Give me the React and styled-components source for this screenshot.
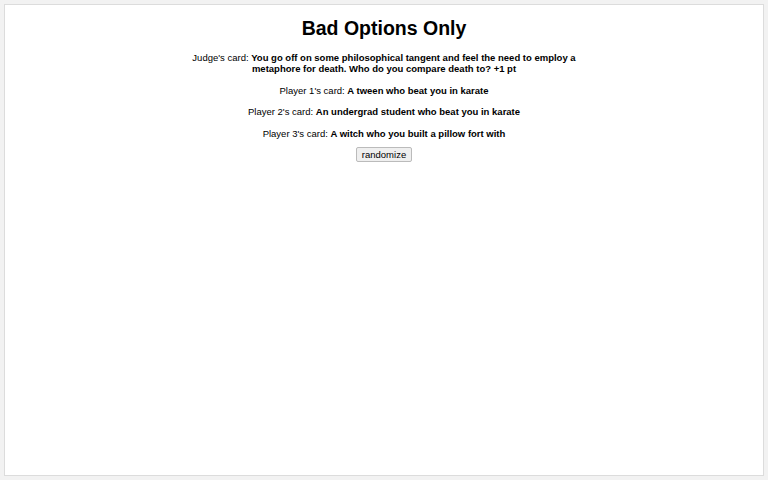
import React, { useState } from 'react'
import styled, { createGlobalStyle } from 'styled-components'

const GlobalStyle = createGlobalStyle`
  html, body {
    margin: 0;
    padding: 0;
    background: #f2f2f2;
    font-family: "Liberation Sans", Arial, sans-serif;
  }
`

const judgeCards = [
  'You go off on some philosophical tangent and feel the need to employ a metaphore for death. Who do you compare death to? +1 pt',
]

const playerCards = [
  'A tween who beat you in karate',
  'An undergrad student who beat you in karate',
  'A witch who you built a pillow fort with',
]

const App = () => {
  const [judge] = useState(judgeCards[0])
  const [players] = useState(playerCards)

  return (
    <>
      <GlobalStyle />
      <Page>
        <Panel>
          <Title>Bad Options Only</Title>
          <Cards>
            <Card>
              Judge's card: <b>{judge}</b>
            </Card>
            {players.map((card, i) => (
              <Card key={i}>
                Player {i + 1}'s card: <b>{card}</b>
              </Card>
            ))}
          </Cards>
          <Button>randomize</Button>
        </Panel>
      </Page>
    </>
  )
}

const Page = styled.div`
  padding: 4px;
  height: 480px;
  box-sizing: border-box;
`
const Panel = styled.div`
  height: 472px;
  box-sizing: border-box;
  background: #fff;
  border: 1px solid #dcdcdc;
  display: flex;
  flex-direction: column;
  align-items: center;
  padding-top: 12px;
`
const Title = styled.h1`
  font-size: 19.5px;
  font-weight: bold;
  margin: 0 0 12px;
  color: #000;
`
const Cards = styled.div`
  max-width: 400px;
  text-align: center;
`
const Card = styled.p`
  font-size: 9.5px;
  line-height: 11px;
  margin: 0 0 10.7px;
  color: #000;
  b {
    font-weight: bold;
  }
`
const Button = styled.button`
  font-family: "Liberation Sans", Arial, sans-serif;
  font-size: 9.5px;
  padding: 1px 5px;
  margin-top: -3px;
  background: #efefef;
  border: 1px solid #bbb;
  border-radius: 2px;
  color: #000;
`

export default App
